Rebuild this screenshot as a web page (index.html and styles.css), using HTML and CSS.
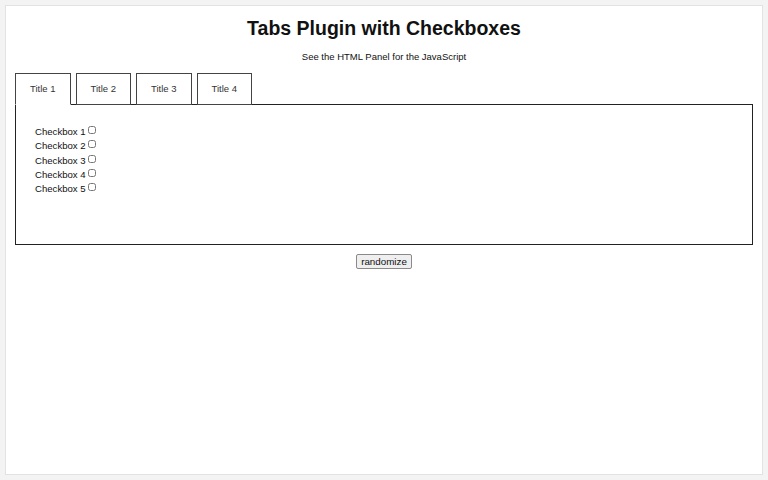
FILE: index.html
```html
<!DOCTYPE html>
<html>
  <head>
    <meta charset="utf-8">
    <title>Tabs Plugin with Checkboxes</title>
    <link rel="stylesheet" href="styles.css">
  </head>
  <body>
    <div class="sheet">
      <h1>Tabs Plugin with Checkboxes</h1>
      <p class="note">See the HTML Panel for the JavaScript</p>

      <div class="tabs">
        <ul class="tab-list">
          <li class="tab active">Title 1</li>
          <li class="tab">Title 2</li>
          <li class="tab">Title 3</li>
          <li class="tab">Title 4</li>
        </ul>
        <div class="tab-panel">
          <label class="check">Checkbox 1 <input type="checkbox"></label>
          <label class="check">Checkbox 2 <input type="checkbox"></label>
          <label class="check">Checkbox 3 <input type="checkbox"></label>
          <label class="check">Checkbox 4 <input type="checkbox"></label>
          <label class="check">Checkbox 5 <input type="checkbox"></label>
        </div>
      </div>

      <div class="actions">
        <button class="randomize" type="button">randomize</button>
      </div>
    </div>
  </body>
</html>
```

FILE: styles.css
```css
html { margin: 0; padding: 0; background-color: #f3f3f3; }
body { margin: 0; padding: 5px; font-family: "Liberation Sans", Arial, sans-serif; color: #111; }

.sheet { box-sizing: border-box; height: 470px; background-color: white;
         border: 1px solid #e2e2e2; padding: 10px 9px; }

h1 { margin: 0; font-size: 19.5px; line-height: 24px; text-align: center; color: #111; }

.note { margin: 11px 0 0 0; font-size: 9.5px; line-height: 12px; text-align: center; }

/* tab strip sits on top of the panel border */
.tabs { margin-top: 10px; }
.tab-list { display: flex; gap: 5px; margin: 0 0 -1px 0; padding: 0; list-style: none; }
.tab { box-sizing: border-box; width: 55.5px; height: 32px; border: 1px solid #444;
       font-size: 9.5px; line-height: 30px; text-align: center; color: #333;
       background-color: white; }
.tab.active { border-bottom-color: white; position: relative; z-index: 1; }

.tab-panel { box-sizing: border-box; height: 141px; border: 1px solid #222;
             padding: 20px 19px; }

.check { display: block; font-size: 9.6px; line-height: 14.3px; color: #111; }
.check input { width: 8px; height: 8px; margin: 0 0 0 0; vertical-align: 1px; }

.actions { margin-top: 6px; text-align: center; }
.randomize { font-family: "Liberation Sans", Arial, sans-serif; font-size: 9.8px;
             line-height: 11px; padding: 1px 4px; color: #111;
             background-color: #efefef; border: 1px solid #8a8a8a; border-radius: 2px; }
```
